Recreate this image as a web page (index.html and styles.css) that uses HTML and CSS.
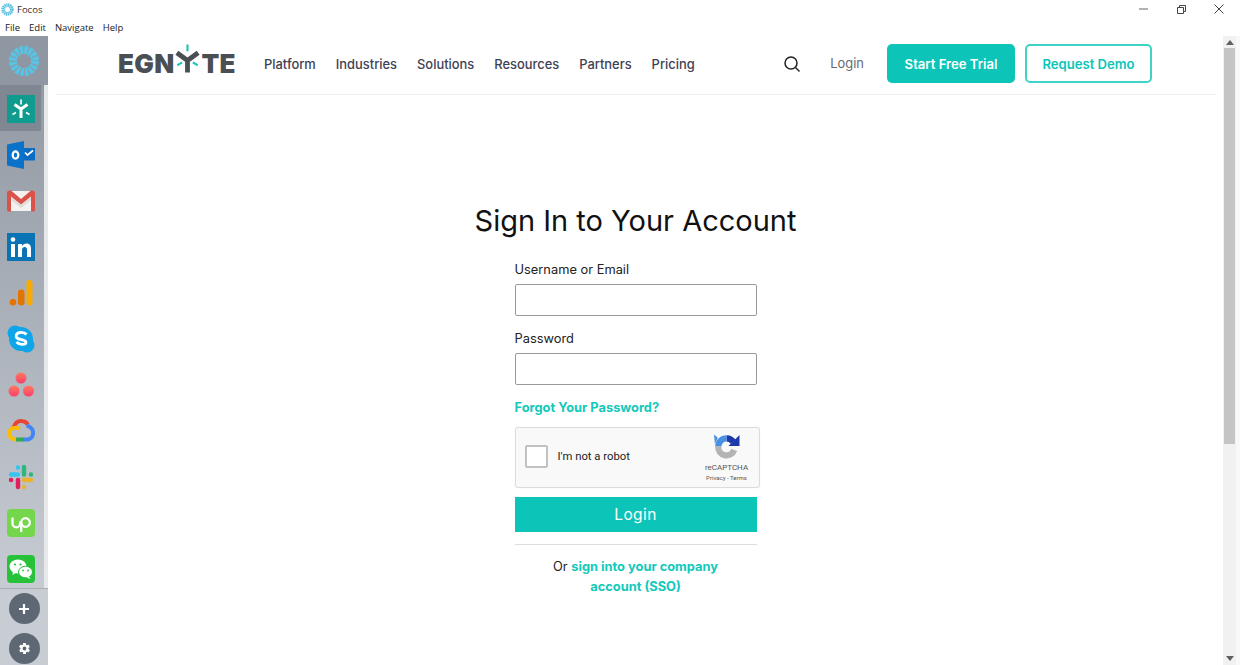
FILE: index.html
```html
<!DOCTYPE html>
<html lang="en">
<head>
<meta charset="utf-8">
<title>Focos</title>
<link rel="stylesheet" href="styles.css">
</head>
<body>
<div class="titlebar">
  <div class="app-title">
    <svg class="app-icon" viewBox="0 0 24 24"><circle cx="12" cy="12" r="8" fill="none" stroke="#5dbfdf" stroke-width="7" stroke-dasharray="2.300 .84"/></svg>
    <span>Focos</span>
  </div>
  <div class="win-controls">
    <svg viewBox="0 0 12 12"><path d="M2 6h9" stroke="#666" fill="none"/></svg>
    <svg viewBox="0 0 12 12"><path d="M2.500 4.500h6v6h-6zM4.500 4.500V2.500h6v6h-2" stroke="#444" fill="none"/></svg>
    <svg viewBox="0 0 12 12"><path d="M1.500 1.500l9 9M10.500 1.500l-9 9" stroke="#444" fill="none"/></svg>
  </div>
</div>
<nav class="menubar"><span>File</span><span>Edit</span><span>Navigate</span><span>Help</span></nav>
<div class="shell">
  <aside class="sidebar">
    <div class="side-logo">
      <svg viewBox="0 0 32 32" width="32" height="32"><circle cx="16" cy="16" r="11" fill="none" stroke="#58c3e3" stroke-width="8" stroke-dasharray="3.320 1"/></svg>
    </div>
    <div class="side-apps">
      <div class="side-app active">
        <svg viewBox="0 0 28 28" width="28" height="28"><rect width="28" height="28" fill="#0f9b8e"/><path d="M14 14V23M14 14L7.500 9.500M14 14l6.500-4.500" stroke="#fff" stroke-width="3" fill="none"/><path d="M14 4.500v5M5.500 19.500L9 17.500M22.500 19.500L19 17.500" stroke="#fff" stroke-width="1.600"/></svg>
      </div>
      <div class="side-app">
        <svg viewBox="0 0 28 28" width="28" height="28"><path d="M16 7h12v12.500H16z" fill="#0a6cc2"/><path d="M18 11.500l2.500 2.500 5.500-4.500" stroke="#fff" stroke-width="1.700" fill="none"/><path d="M0 3.500L17 0v28L0 24.500z" fill="#0a72c9"/><ellipse cx="8.500" cy="14" rx="2.800" ry="3.600" fill="none" stroke="#fff" stroke-width="2.200"/></svg>
      </div>
      <div class="side-app">
        <svg viewBox="0 0 28 28" width="28" height="28"><path d="M2 4h24v20H2z" fill="#f4f2ee"/><path d="M4 10l10 8 10-8v3L14 21 4 13z" fill="#dedcd8"/><path d="M0 6Q0 3.500 2.500 3.500H4L14 12 24 3.500h1.500Q28 3.500 28 6V23q0 1.500-1.500 1.500H24V9.500L14 17.500 4 9.500V24.500H1.500Q0 24.500 0 23z" fill="#d9534a"/></svg>
      </div>
      <div class="side-app">
        <svg viewBox="0 0 28 28" width="28" height="28"><rect width="28" height="28" fill="#0a73b4"/><path d="M4 11h4v13H4zM11 11h4v2c1-1.500 2.500-2.400 4.500-2.400 3.300 0 4.500 2.200 4.500 5.400v8h-4v-7c0-1.800-.6-3-2.200-3S15 15.200 15 17v7h-4z" fill="#fff"/><circle cx="6" cy="6.500" r="2.300" fill="#fff"/></svg>
      </div>
      <div class="side-app">
        <svg viewBox="0 0 28 28" width="28" height="28"><rect x="19.500" y="1" width="6" height="25.500" rx="3" fill="#f9ab00"/><rect x="11" y="10.500" width="6.500" height="16" rx="3" fill="#e37400"/><circle cx="6" cy="23.300" r="3.300" fill="#e37400"/></svg>
      </div>
      <div class="side-app">
        <svg viewBox="0 0 28 28" width="28" height="28"><circle cx="8" cy="8" r="7.500" fill="#0ea5e9"/><circle cx="20" cy="20" r="7.500" fill="#0ea5e9"/><circle cx="14" cy="14" r="12" fill="#0ea5e9"/><path d="M19.500 9.500C18 7.800 15.800 7.300 13.500 7.500c-2.800.3-4.500 1.800-4.300 4 .4 4 10 2.500 9.800 6-.2 2.500-6.500 2.800-9.500-.5" fill="none" stroke="#fff" stroke-width="2.800"/></svg>
      </div>
      <div class="side-app">
        <svg viewBox="0 0 28 28" width="28" height="28"><defs><linearGradient id="asana" x1="0" y1="0" x2="0" y2="1"><stop offset="0" stop-color="#ff7a5f"/><stop offset="1" stop-color="#f8406c"/></linearGradient></defs><circle cx="14" cy="7" r="5.500" fill="url(#asana)"/><circle cx="7" cy="20" r="5.500" fill="url(#asana)"/><circle cx="21.500" cy="20" r="5.500" fill="url(#asana)"/></svg>
      </div>
      <div class="side-app">
        <svg viewBox="0 0 28 28" width="28" height="28"><path d="M6.500 10.500C8 6 11 3.500 15 4c2.700.2 4.700 1.600 6 3.700" fill="none" stroke="#ea4335" stroke-width="4"/><path d="M19.500 8.500c4.500 1 7 4.500 6.500 8.500-.4 3.300-3 5.500-6 5.500h-4" fill="none" stroke="#4285f4" stroke-width="4"/><path d="M17 22.500H9" fill="none" stroke="#34a853" stroke-width="4"/><path d="M9 22.500c-4-.2-7-2.400-7-6s3-5.800 6.500-5.800c1.500 0 3 .5 4 1.500" fill="none" stroke="#fbbc04" stroke-width="4"/></svg>
      </div>
      <div class="side-app">
        <svg viewBox="0 0 28 28" width="28" height="28"><g fill="none" stroke-width="4.400" stroke-linecap="round"><path d="M11 4.500v.1M4 11.500h7" stroke="#36c5f0"/><path d="M24 11.500h-.1M17 4v7.500" stroke="#2eb67d"/><path d="M17 24v-.1M24 17h-7" stroke="#ecb22e"/><path d="M4 17h.1M11 24v-7" stroke="#e01e5a"/></g></svg>
      </div>
      <div class="side-app">
        <svg viewBox="0 0 28 28" width="28" height="28"><rect width="28" height="28" rx="4" fill="#74d64a"/><path d="M5.500 8.500v6a3.800 3.800 0 0 0 7.600 0v-2" fill="none" stroke="#fff" stroke-width="2.300"/><circle cx="18.500" cy="13.500" r="4.300" fill="none" stroke="#fff" stroke-width="2.300"/><path d="M14.200 13.500V23" fill="none" stroke="#fff" stroke-width="2.300"/></svg>
      </div>
      <div class="side-app">
        <svg viewBox="0 0 28 28" width="28" height="28"><rect width="28" height="28" rx="4" fill="#27c13a"/><ellipse cx="11" cy="11.500" rx="8.500" ry="7" fill="#fff"/><path d="M6 16l-.5 4 4-2.500z" fill="#fff"/><ellipse cx="18.500" cy="17" rx="7" ry="5.800" fill="#fff" stroke="#27c13a"/><path d="M22 21.500l1.500 2.500-4-1.500z" fill="#fff"/><circle cx="8" cy="9.500" r="1.100" fill="#27c13a"/><circle cx="13.500" cy="9.500" r="1.100" fill="#27c13a"/><circle cx="16" cy="15.500" r=".9" fill="#27c13a"/><circle cx="21" cy="15.500" r=".9" fill="#27c13a"/></svg>
      </div>
    </div>
    <div class="side-tools">
      <div class="tool">
        <svg viewBox="0 0 12 12" width="12" height="12"><path d="M6 1v10M1 6h10" stroke="#fff" stroke-width="2.200"/></svg>
      </div>
      <div class="tool">
        <svg viewBox="0 0 24 24" width="13" height="13"><path fill="#fff" d="M19.400 13c.1-.3.100-.7.100-1s0-.7-.1-1l2.100-1.600c.2-.2.200-.4.100-.6l-2-3.500c-.1-.2-.4-.3-.6-.2l-2.500 1c-.5-.4-1.100-.7-1.700-1l-.4-2.600c0-.3-.2-.5-.5-.5h-4c-.3 0-.5.200-.5.500l-.4 2.600c-.6.300-1.200.6-1.700 1l-2.500-1c-.2-.1-.5 0-.6.200l-2 3.500c-.1.200-.1.400.1.600L4.600 11c0 .3-.1.700-.1 1s0 .7.100 1l-2.100 1.600c-.2.200-.2.400-.1.600l2 3.500c.1.200.4.300.6.200l2.500-1c.5.400 1.100.7 1.700 1l.4 2.600c0 .3.200.5.500.5h4c.3 0 .5-.2.500-.5l.4-2.600c.6-.3 1.200-.6 1.700-1l2.500 1c.2.100.5 0 .6-.2l2-3.500c.1-.2.100-.4-.1-.6zM12 15.500a3.500 3.500 0 1 1 0-7 3.500 3.500 0 0 1 0 7z"/></svg>
      </div>
    </div>
  </aside>
  <main class="page">
    <header class="site-header">
      <div class="brand">
        <span>EGN</span>
        <svg class="brand-y" viewBox="0 0 30 30" width="29" height="30"><path d="M15 16.500V29M15 16.500L4 8.500M15 16.500l11-8" stroke="#4a4f54" stroke-width="5" fill="none"/><path d="M15 0v7M4.500 21.500l5-3M25.500 21.500l-5-3" stroke="#1fc4b6" stroke-width="2.200" fill="none"/></svg>
        <span>TE</span>
      </div>
      <ul class="nav-links">
        <li>Platform</li><li>Industries</li><li>Solutions</li><li>Resources</li><li>Partners</li><li>Pricing</li>
      </ul>
      <div class="header-actions">
        <svg class="search" viewBox="0 0 18 18" width="18" height="18"><circle cx="8" cy="8" r="6" fill="none" stroke="#222" stroke-width="1.500"/><path d="M12.500 12.500l4 4" stroke="#222" stroke-width="1.500"/></svg>
        <span class="login-link">Login</span>
        <a class="btn btn-solid">Start Free Trial</a>
        <a class="btn btn-outline">Request Demo</a>
      </div>
    </header>
    <section class="signin">
      <h1>Sign In to Your Account</h1>
      <form class="form">
        <label for="user">Username or Email</label>
        <input id="user" type="text">
        <label for="pass">Password</label>
        <input id="pass" type="password">
        <a class="forgot">Forgot Your Password?</a>
        <div class="captcha">
          <span class="check"></span>
          <span class="robot">I'm not a robot</span>
          <div class="rc">
            <svg viewBox="0 0 28 28" width="27" height="27"><path d="M14 5.500a8.500 8.500 0 0 1 7 3.700" fill="none" stroke="#1c3aa9" stroke-width="6.500"/><path d="M27.500 2v11.500H16z" fill="#1c3aa9"/><path d="M5.500 14A8.500 8.500 0 0 1 14 5.500" fill="none" stroke="#4a90e2" stroke-width="6.500"/><path d="M1 1.500l4 3.500-3 6.500z" fill="#4a90e2"/><path d="M22 17.500A8.500 8.500 0 0 1 5.500 14" fill="none" stroke="#b4b4b4" stroke-width="6.500"/></svg>
            <span class="rc-name">reCAPTCHA</span>
            <span class="rc-terms">Privacy - Terms</span>
          </div>
        </div>
        <button type="button" class="login-btn">Login</button>
        <hr>
        <p class="sso">Or <a>sign into your company account (SSO)</a></p>
      </form>
    </section>
  </main>
  <div class="scrollbar">
    <svg viewBox="0 0 8 5" width="8" height="5"><path d="M0 5l4-5 4 5z" fill="#606060"/></svg>
    <div class="thumb"></div>
    <svg viewBox="0 0 8 5" width="8" height="5"><path d="M0 0l4 5 4-5z" fill="#606060"/></svg>
  </div>
</div>
</body>
</html>
```
FILE: styles.css
```css
* { box-sizing: border-box; }
html, body { margin: 0; height: 665px; overflow: hidden; }
body { background: #fff; font-family: Inter, "Liberation Sans", sans-serif; display: flex; flex-direction: column; }

.titlebar { height: 18px; display: flex; justify-content: space-between; align-items: center; flex: none; }
.app-title { display: flex; align-items: center; gap: 3px; font: 9.500px "Open Sans", sans-serif; color: #333; padding-left: 1px; }
.app-icon { width: 13px; height: 13px; }
.win-controls { display: flex; gap: 26px; padding-right: 15px; }
.win-controls svg { width: 12px; height: 12px; display: block; }
.menubar { height: 18px; flex: none; display: flex; gap: 9px; padding: 0 0 0 5px; align-items: center; font: 9.500px "Open Sans", sans-serif; color: #222; }

.shell { flex: 1; min-height: 0; display: flex; }
.sidebar { width: 48px; flex: none; display: flex; flex-direction: column; background: linear-gradient(#8d959f, #cfd3da); position: relative; }
.side-logo { height: 49px; flex: none; display: flex; align-items: center; justify-content: center; background: #8f97a2; }
.side-apps { flex: 1; min-height: 0; border-right: 4px solid #e6e8ea; }
.side-app { height: 46px; display: flex; align-items: center; justify-content: center; padding: 2px 3px 0 0; }
.side-app.active { background: #7f8792; margin-right: 3px; padding-right: 0; }
.side-tools { flex: none; height: 77px; border-top: 1px solid #a9aeb5; padding-top: 4px; display: flex; flex-direction: column; align-items: center; gap: 9px; background: #c8ccd3; }
.tool { width: 31px; height: 31px; border-radius: 50%; background: #5e6875; display: flex; align-items: center; justify-content: center; flex: none; }

.page { flex: 1; min-width: 0; display: flex; flex-direction: column; }
.site-header { height: 59px; margin: 0 7px; flex: none; border-bottom: 1px solid #f1f1f1; display: flex; align-items: center; padding: 0 64px 3px 63px; }
.brand { display: flex; align-items: center; font-size: 26px; font-weight: 900; color: #4a4f54; letter-spacing: .3px; width: 146px; flex: none; line-height: 1; }
.brand-y { margin: -9px -1px 0 -1px; }
.nav-links { list-style: none; margin: 2px 0 0; padding: 0; display: flex; gap: 20px; font-size: 12.900px; font-weight: 500; color: #3f4254; }
.header-actions { margin-left: auto; display: flex; align-items: center; font-size: 13.100px; font-weight: 500; }
.search { margin-right: 29px; }
.login-link { color: #666a73; margin-right: 23px; font-size: 12.900px; font-weight: 400; }
.btn { height: 39px; display: flex; align-items: center; justify-content: center; border-radius: 5px; font-weight: 600; }
.btn-solid { width: 128px; background: #0cc5b8; color: #fff; margin-right: 10px; }
.btn-outline { width: 127px; background: #fff; color: #0cc5b8; border: 2px solid #3fd2c7; }

.signin { flex: 1; display: flex; flex-direction: column; align-items: center; padding-top: 106px; }
h1 { margin: 0 0 19px; font-size: 29px; font-weight: 400; line-height: 40px; color: #111; }
.form { width: 242px; display: flex; flex-direction: column; font-size: 12.850px; color: #222; }
label { line-height: 18px; margin: 1px 0 5px; }
input { height: 32px; border: 1px solid #999; border-radius: 2px; background: #fff; margin-bottom: 13px; padding: 0; }
.forgot { color: #12c9bb; font-size: 12.850px; font-weight: 700; line-height: 18px; margin: 1px 0 10px; white-space: nowrap; }
.captcha { width: 245px; height: 61px; border: 1px solid #dcdcdc; border-radius: 3px; background: #f9f9f9; display: flex; align-items: center; padding: 0 10px 3px 9px; margin-bottom: 9px; box-shadow: 0 0 2px rgba(0,0,0,.06); }
.check { width: 23px; height: 23px; background: #fff; border: 2px solid #c1c1c1; border-radius: 2px; flex: none; }
.robot { margin: 1px 0 0 10px; font: 11.300px Roboto, sans-serif; color: #222; flex: 1; }
.rc { width: 44px; display: flex; flex-direction: column; align-items: center; color: #555; margin-top: 4px; }
.rc-name { font: 8px Roboto, sans-serif; margin-top: 2px; line-height: 11px; white-space: nowrap; }
.rc-terms { font: 6px Roboto, sans-serif; line-height: 10px; white-space: nowrap; }
.login-btn { height: 35px; border: 0; padding: 0; background: #0cc5b8; color: #fff; font: 400 15.500px Inter, sans-serif; letter-spacing: .4px; }
hr { border: 0; border-top: 1px solid #ddd; width: 100%; margin: 12px 0 12px; }
.sso { margin: 0; text-align: center; line-height: 20px; padding: 0 20px; }
.sso a { color: #12c9bb; font-weight: 700; }

.scrollbar { width: 17px; flex: none; background: #f1f1f1; border-right: 4px solid #f8f8f8; display: flex; flex-direction: column; align-items: center; padding: 4px 0; }
.thumb { width: 11px; height: 396px; background: #c4c4c4; margin: 3px 0 auto; }
```
